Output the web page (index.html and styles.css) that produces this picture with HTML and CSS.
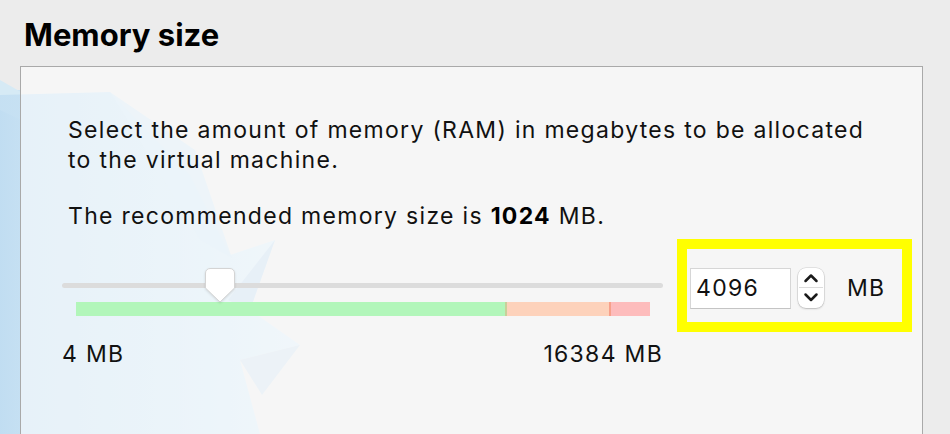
FILE: index.html
```html
<!DOCTYPE html>
<html>
<head>
<meta charset="utf-8">
<link rel="stylesheet" href="styles.css">
</head>
<body>
<svg class="deco" width="950" height="434" viewBox="0 0 950 434" aria-hidden="true">
  <defs>
    <linearGradient id="strip" x1="0" y1="0" x2="1" y2="0">
      <stop offset="0" stop-color="#b9d9ef"/>
      <stop offset="1" stop-color="#cfe5f4"/>
    </linearGradient>
    <linearGradient id="star" x1="0" y1="0" x2="1" y2="0">
      <stop offset="0" stop-color="#c2def2"/>
      <stop offset="0.6" stop-color="#cfe6f4"/>
      <stop offset="1" stop-color="#dcecf6"/>
    </linearGradient>
  </defs>
  <rect x="0" y="90" width="21" height="344" fill="url(#strip)"/>
  <polygon points="0,80 21,92 21,120 0,110" fill="#d6eaf5"/>
  <polygon points="0,95 110,92 190,175 230,255 275,240 250,310 300,345 240,360 260,434 0,434" fill="url(#star)" opacity="0.85"/>
  <polygon points="110,92 195,150 232,258 200,240" fill="#d2e6f3" opacity="0.8"/>
  <polygon points="275,240 250,310 228,300" fill="#c9dcec" opacity="0.9"/>
  <polygon points="300,345 240,360 262,395" fill="#cfe0ee" opacity="0.8"/>
</svg>
<h1 class="title">Memory size</h1>
<div class="panel">
  <p class="desc">Select the amount of memory (RAM) in megabytes to be allocated<br>to the virtual machine.</p>
  <p class="desc rec">The recommended memory size is <b>1024</b> MB.</p>
  <div class="row">
    <div class="slidercol">
      <div class="slider">
        <div class="track"></div>
        <svg class="thumb" width="32" height="37" viewBox="0 0 32 37">
          <path d="M6 1.5 H26 A4.5 4.5 0 0 1 30.5 6 V21 L16 35 L1.5 21 V6 A4.5 4.5 0 0 1 6 1.5 Z" fill="#ffffff" stroke="#d4d4d4" stroke-width="1"/>
        </svg>
      </div>
      <div class="scale">
        <div class="seg green"></div>
        <div class="seg orange"></div>
        <div class="seg red"></div>
      </div>
      <div class="labels">
        <span>4 MB</span>
        <span>16384 MB</span>
      </div>
    </div>
    <div class="hilite">
      <div class="field">4096</div>
      <div class="stepper">
        <svg width="26" height="40" viewBox="0 0 26 40">
          <path d="M7.5 13 L13 7.5 L18.5 13" fill="none" stroke="#1a1a1a" stroke-width="2.5" stroke-linecap="round" stroke-linejoin="round"/>
          <line x1="1" y1="19.5" x2="25" y2="19.5" stroke="#dcdcdc" stroke-width="1"/>
          <path d="M7.5 26.5 L13 32 L18.5 26.5" fill="none" stroke="#1a1a1a" stroke-width="2.5" stroke-linecap="round" stroke-linejoin="round"/>
        </svg>
      </div>
      <span class="unit">MB</span>
    </div>
  </div>
</div>
</body>
</html>
```
FILE: styles.css
```css
html, body {
  margin: 0;
  padding: 0;
}
body {
  width: 950px;
  height: 434px;
  overflow: hidden;
  background: #ececec;
  font-family: Inter, "Liberation Sans", sans-serif;
  color: #111;
  position: relative;
}
.deco {
  position: absolute;
  left: 0;
  top: 0;
  z-index: 0;
}
.title {
  position: relative;
  z-index: 1;
  margin: 0;
  padding: 17px 0 0 24px;
  height: 66px;
  box-sizing: border-box;
  font-size: 31px;
  line-height: 36px;
  font-weight: 700;
  color: #000;
}
.panel {
  position: relative;
  z-index: 1;
  margin: 0 27px 0 20px;
  height: 368px;
  border: 1px solid #a9a9a9;
  border-bottom: none;
  background: rgba(255, 255, 255, 0.55);
  padding: 48px 0 0 41px;
  box-sizing: border-box;
}
.desc {
  margin: 0 0 26px 6px;
  font-size: 23px;
  line-height: 30px;
  letter-spacing: 1.3px;
  color: #111;
}
.desc.rec {
  margin-bottom: 8px;
}
.desc b {
  font-weight: 700;
  color: #000;
}
.row {
  display: flex;
  align-items: flex-start;
  gap: 14px;
}
.slidercol {
  width: 601px;
  padding-top: 29px;
}
.slider {
  position: relative;
  height: 34px;
}
.track {
  position: relative;
  top: 15px;
  height: 5px;
  border-radius: 3px;
  background: #dcdcdc;
}
.thumb {
  position: absolute;
  left: 142px;
  top: -1px;
  filter: drop-shadow(0 1px 1px rgba(0, 0, 0, 0.12));
}
.scale {
  display: flex;
  margin-left: 14px;
  width: 574px;
  height: 14px;
}
.seg.green {
  width: 429px;
  background: #b2f6ba;
  border-right: 2px solid #c8d09a;
}
.seg.orange {
  width: 102px;
  background: #fdd2bb;
  border-right: 2px solid #f7a08a;
}
.seg.red {
  flex: 1;
  background: #fdbcbc;
}
.labels {
  display: flex;
  justify-content: space-between;
  margin-top: 26px;
  font-size: 23px;
  line-height: 24px;
  letter-spacing: 1.3px;
  color: #111;
}
.hilite {
  width: 235px;
  height: 93px;
  box-sizing: border-box;
  border: 10px solid #ffff00;
  display: flex;
  align-items: flex-start;
  padding: 19px 0 0 3px;
}
.field {
  width: 101px;
  height: 41px;
  box-sizing: border-box;
  background: #fff;
  border: 1px solid #d6d6d6;
  border-bottom-color: #c4c4c4;
  padding: 0 0 0 5px;
  font-size: 23px;
  line-height: 39px;
  letter-spacing: 1.3px;
  color: #111;
}
.stepper {
  margin-left: 7px;
  width: 26px;
  height: 40px;
  background: #fff;
  border-radius: 8px;
  box-shadow: 0 0 0 0.5px rgba(0, 0, 0, 0.15), 0 1px 2px rgba(0, 0, 0, 0.18);
  display: flex;
}
.unit {
  margin-left: 23px;
  font-size: 23px;
  line-height: 40px;
  letter-spacing: 1.3px;
  color: #111;
}
```
